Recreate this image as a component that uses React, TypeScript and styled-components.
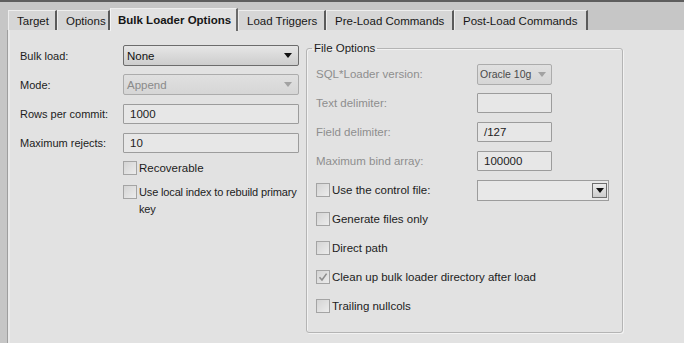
import styled, { createGlobalStyle } from 'styled-components'

const GlobalStyle = createGlobalStyle`
  html, body {
    margin: 0;
    padding: 0;
    background: #e2e2e2;
  }
  body {
    font-family: 'Liberation Sans', Arial, sans-serif;
    font-size: 11px;
    color: #1c1c1c;
  }
`

const Window = styled.div`
  width: 684px;
  height: 343px;
  display: flex;
  flex-direction: column;
  overflow: hidden;
  border-top: 2px solid #5e5e5e;
  box-sizing: border-box;
  background: #c6c6c6;
`

const TabStrip = styled.div`
  height: 28px;
  flex: none;
  display: flex;
  align-items: flex-end;
  padding-left: 8px;
`

const Tab = styled.div<{ $active?: boolean; $w: number }>`
  width: ${(p) => p.$w}px;
  height: ${(p) => (p.$active ? 23 : 20)}px;
  box-sizing: border-box;
  display: flex;
  align-items: center;
  padding-left: ${(p) => (p.$active ? 7 : 8)}px;
  padding-top: 1px;
  padding-bottom: ${(p) => (p.$active ? 2 : 0)}px;
  background: ${(p) => (p.$active ? '#e2e2e2' : '#d6d6d6')};
  border-left: 1px solid ${(p) => (p.$active ? '#f4f4f4' : '#ececec')};
  border-right: 2px solid ${(p) => (p.$active ? '#6a6a6a' : '#5a5a5a')};
  border-top: 1px solid #eeeeee;
  font-weight: ${(p) => (p.$active ? 'bold' : 'normal')};
  font-size: 11.5px;
  color: #161616;
  white-space: nowrap;
  margin-bottom: ${(p) => (p.$active ? -1 : 0)}px;
  position: relative;
  z-index: ${(p) => (p.$active ? 1 : 0)};
`

const Body = styled.div`
  flex: 1;
  display: flex;
  padding-left: 7px;
`

const Panel = styled.div`
  flex: 1;
  display: flex;
  align-items: flex-start;
  gap: 7px;
  background: #e2e2e2;
  border-left: 1px solid #9e9e9e;
  box-shadow: inset 2px 0 0 #ebebeb;
  padding: 15px 0 0 12px;
`

const LeftGrid = styled.div`
  display: grid;
  grid-template-columns: 103px 176px;
  grid-auto-rows: 21px;
  row-gap: 8px;
  align-items: center;
`

const Label = styled.div<{ $disabled?: boolean }>`
  color: ${(p) => (p.$disabled ? '#8e8e8e' : '#1c1c1c')};
  white-space: nowrap;
`

const ComboBox = styled.div<{ $disabled?: boolean; $w?: number; $dark?: boolean }>`
  width: ${(p) => (p.$w ? `${p.$w}px` : '100%')};
  height: 21px;
  box-sizing: border-box;
  display: flex;
  align-items: center;
  justify-content: space-between;
  padding: 0 ${(p) => (p.$w ? 5 : 6)}px 0 ${(p) => (p.$w ? 2 : 3)}px;
  border: 1px solid ${(p) => (p.$disabled ? '#acacac' : '#6c6c6c')};
  border-radius: 2px;
  background: ${(p) =>
    p.$disabled
      ? 'linear-gradient(#e0e0e0, #d6d6d6)'
      : 'linear-gradient(#e6e6e6, #cdcdcd)'};
  color: ${(p) => (p.$dark ? '#4a4a4a' : p.$disabled ? '#8a8a8a' : '#111')};
  font-size: ${(p) => (p.$w ? 10.5 : 11.5)}px;
  white-space: nowrap;
`

const Arrow = styled.span<{ $disabled?: boolean }>`
  flex: none;
  width: 0;
  height: 0;
  border-left: 4px solid transparent;
  border-right: 4px solid transparent;
  border-top: 5px solid ${(p) => (p.$disabled ? '#a2a2a2' : '#111')};
`

const TextInput = styled.div<{ $w?: number }>`
  width: ${(p) => (p.$w ? `${p.$w}px` : '100%')};
  height: 20px;
  box-sizing: border-box;
  display: flex;
  align-items: center;
  padding-left: 6px;
  border: 1px solid #9c9c9c;
  border-radius: 1px;
  background: #e7e7e7;
  color: #222;
  font-size: 11.5px;
`

const ControlCombo = styled.div`
  width: 132px;
  height: 21px;
  box-sizing: border-box;
  display: flex;
  justify-content: flex-end;
  align-items: center;
  padding-right: 1px;
  border: 1px solid #9c9c9c;
  background: #e8e8e8;
`

const DropButton = styled.div`
  width: 15px;
  height: 15px;
  box-sizing: border-box;
  display: flex;
  align-items: center;
  justify-content: center;
  border: 1px solid #6e6e6e;
  background: linear-gradient(#ececec, #cccccc);
`

const CheckRow = styled.div<{ $col?: string; $top?: number }>`
  grid-column: ${(p) => p.$col ?? '2'};
  align-self: start;
  display: flex;
  align-items: flex-start;
  gap: 2px;
  line-height: 17px;
  margin-top: ${(p) => p.$top ?? 0}px;
  color: #1c1c1c;
  font-size: 11.5px;
`

const Box = styled.span`
  flex: none;
  width: 14px;
  height: 14px;
  margin-top: 1px;
  box-sizing: border-box;
  border: 1px solid #a4a4a4;
  background: linear-gradient(135deg, #d4d4d4, #ececec);
  display: flex;
  align-items: center;
  justify-content: center;
`

const WrapText = styled.span`
  flex: none;
  width: 164px;
  white-space: normal;
  font-size: 11px;
  letter-spacing: -0.15px;
`

const FileOptions = styled.fieldset`
  margin: -3px 0 0 0;
  width: 317px;
  height: 291px;
  box-sizing: border-box;
  padding: 9px 0 0 9px;
  border: 1px solid #b4b4b4;
  border-radius: 3px;
  box-shadow: inset 1px 1px 0 #f2f2f2, 1px 1px 0 #f2f2f2;
`

const Legend = styled.legend`
  margin-left: -4px;
  padding: 0 2px;
  font-size: 11.5px;
  line-height: 13px;
  color: #1c1c1c;
`

const RightGrid = styled.div`
  display: grid;
  grid-template-columns: 161px auto;
  grid-auto-rows: 20px;
  row-gap: 9px;
  align-items: center;
  font-size: 11.5px;
`

const Check = ({ checked }: { checked?: boolean }) => (
  <Box>
    {checked && (
      <svg width="10" height="10" viewBox="0 0 10 10">
        <path d="M1.5 5.2 L4 8 L8.6 1.6" fill="none" stroke="#8e8e8e" strokeWidth="1.6" />
      </svg>
    )}
  </Box>
)

const tabs = [
  { label: 'Target', w: 49 },
  { label: 'Options', w: 53 },
  { label: 'Bulk Loader Options', w: 128, active: true },
  { label: 'Load Triggers', w: 88 },
  { label: 'Pre-Load Commands', w: 128 },
  { label: 'Post-Load Commands', w: 134 },
]

export default function App() {
  return (
    <>
      <GlobalStyle />
      <Window>
        <TabStrip>
          {tabs.map((t) => (
            <Tab key={t.label} $w={t.w} $active={t.active}>
              {t.label}
            </Tab>
          ))}
        </TabStrip>
        <Body>
          <Panel>
            <LeftGrid>
              <Label>Bulk load:</Label>
              <ComboBox>
                None
                <Arrow />
              </ComboBox>
              <Label>Mode:</Label>
              <ComboBox $disabled>
                Append
                <Arrow $disabled />
              </ComboBox>
              <Label>Rows per commit:</Label>
              <TextInput>1000</TextInput>
              <Label>Maximum rejects:</Label>
              <TextInput>10</TextInput>
              <CheckRow $top={-1}>
                <Check />
                <span>Recoverable</span>
              </CheckRow>
              <CheckRow $top={-6}>
                <Check />
                <WrapText>Use local index to rebuild primary key</WrapText>
              </CheckRow>
            </LeftGrid>
            <FileOptions>
              <Legend>File Options</Legend>
              <RightGrid>
                <Label $disabled>SQL*Loader version:</Label>
                <ComboBox $disabled $dark $w={75}>
                  Oracle 10g
                  <Arrow $disabled />
                </ComboBox>
                <Label $disabled>Text delimiter:</Label>
                <TextInput $w={75} />
                <Label $disabled>Field delimiter:</Label>
                <TextInput $w={75}>/127</TextInput>
                <Label $disabled>Maximum bind array:</Label>
                <TextInput $w={75}>100000</TextInput>
                <CheckRow $col="1" $top={2}>
                  <Check />
                  <span>Use the control file:</span>
                </CheckRow>
                <ControlCombo>
                  <DropButton>
                    <Arrow />
                  </DropButton>
                </ControlCombo>
                <CheckRow $col="1 / -1" $top={2}>
                  <Check />
                  <span>Generate files only</span>
                </CheckRow>
                <CheckRow $col="1 / -1" $top={2}>
                  <Check />
                  <span>Direct path</span>
                </CheckRow>
                <CheckRow $col="1 / -1" $top={2}>
                  <Check checked />
                  <span>Clean up bulk loader directory after load</span>
                </CheckRow>
                <CheckRow $col="1 / -1" $top={2}>
                  <Check />
                  <span>Trailing nullcols</span>
                </CheckRow>
              </RightGrid>
            </FileOptions>
          </Panel>
        </Body>
      </Window>
    </>
  )
}
